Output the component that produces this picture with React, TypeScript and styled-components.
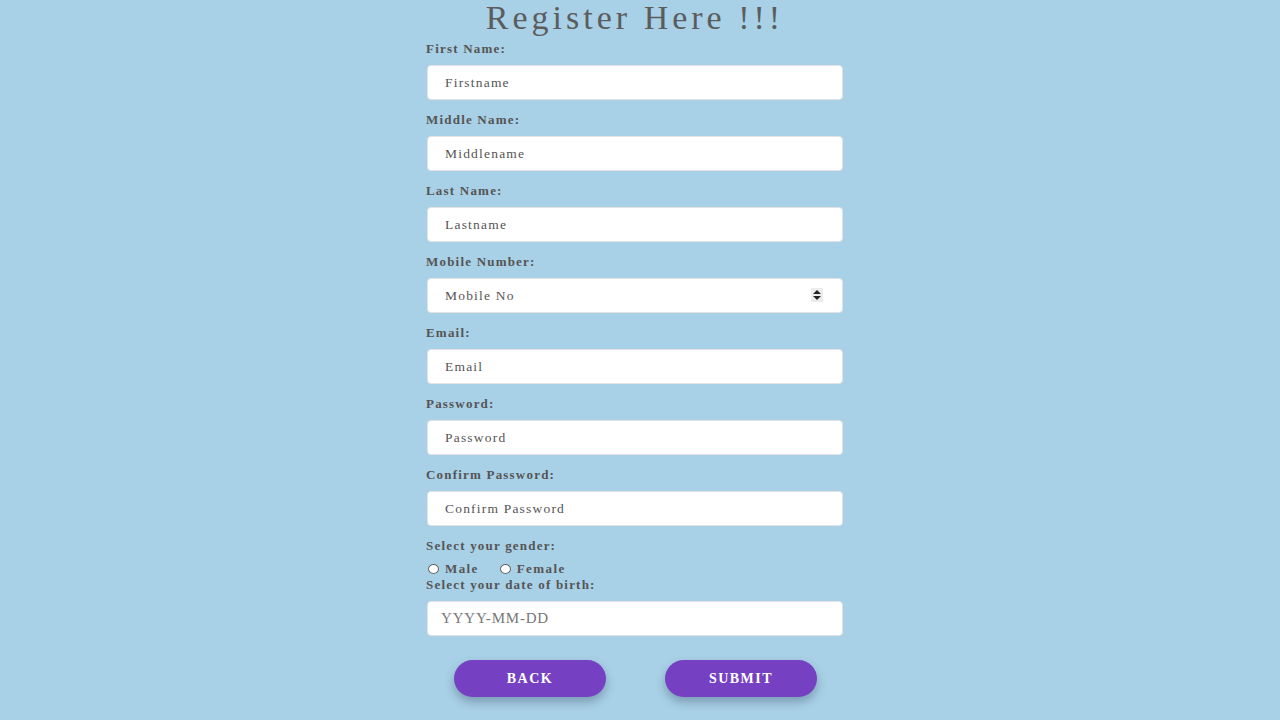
import React from 'react'
import styled, { createGlobalStyle } from 'styled-components'

const GlobalStyle = createGlobalStyle`
  html, body {
    margin: 0;
    padding: 0;
    background: #a8d0e6;
    font-family: "Liberation Serif", "Times New Roman", serif;
    color: #555;
  }
`

const Page = styled.div`
  width: 1280px;
  height: 720px;
  overflow: hidden;
  display: flex;
  flex-direction: column;
  align-items: center;
`

const Title = styled.h1`
  margin: 0 10px 5px 0;
  font-size: 34px;
  font-weight: normal;
  line-height: 36px;
  color: #5c5c5c;
  letter-spacing: 4px;
`

const Form = styled.form`
  width: 418px;
  margin-right: 10px;
  display: flex;
  flex-direction: column;
`

const Field = styled.div`
  display: flex;
  flex-direction: column;
  margin-bottom: 12px;
`

const Label = styled.label<{ $gap?: number }>`
  font-size: 13px;
  font-weight: bold;
  line-height: 16px;
  letter-spacing: 1.2px;
  margin-bottom: ${p => p.$gap ?? 8}px;
`

const Input = styled.input<{ $big?: boolean }>`
  box-sizing: border-box;
  width: 416px;
  height: 35px;
  margin-left: 1px;
  border: 1px solid #e2e2e2;
  border-radius: 4px;
  background: #fff;
  padding: 0 ${p => (p.$big ? '13px' : '17px')};
  font-family: inherit;
  font-size: ${p => (p.$big ? '15px' : '13.5px')};
  letter-spacing: ${p => (p.$big ? '0.8px' : '1.2px')};
  color: #555;
  outline: none;
  &::placeholder {
    color: ${p => (p.$big ? '#777' : '#555')};
  }
`

const NumberBox = styled.div`
  position: relative;
`

const Spinner = styled.span`
  position: absolute;
  right: 21px;
  top: 10px;
  width: 12px;
  height: 14px;
  background: #ececec;
  display: flex;
  align-items: center;
  justify-content: center;
`

const GenderRow = styled.div`
  display: flex;
  align-items: center;
  gap: 19px;
  margin-top: 7px;
  font-size: 13px;
  font-weight: bold;
  line-height: 16px;
  letter-spacing: 1.4px;
`

const Choice = styled.label`
  display: flex;
  align-items: center;
  gap: 6px;
`

const Radio = styled.span`
  display: inline-block;
  box-sizing: border-box;
  width: 11px;
  height: 10px;
  border-radius: 50%;
  border: 1px solid #666;
  background: #fff;
  margin-left: 2px;
`

const Buttons = styled.div`
  display: flex;
  gap: 59px;
  padding-left: 28px;
  margin-top: 12px;
`

const Button = styled.button`
  width: 152px;
  height: 37px;
  border: none;
  border-radius: 19px;
  background: #7541c2;
  color: #fff;
  font-family: inherit;
  font-size: 14px;
  font-weight: bold;
  letter-spacing: 1.5px;
  box-shadow: 0 5px 10px rgba(40, 60, 90, 0.35);
  cursor: pointer;
`

const fields = [
  { label: 'First Name:', placeholder: 'Firstname', type: 'text' },
  { label: 'Middle Name:', placeholder: 'Middlename', type: 'text' },
  { label: 'Last Name:', placeholder: 'Lastname', type: 'text' },
  { label: 'Mobile Number:', placeholder: 'Mobile No', type: 'number' },
  { label: 'Email:', placeholder: 'Email', type: 'text' },
  { label: 'Password:', placeholder: 'Password', type: 'text' },
  { label: 'Confirm Password:', placeholder: 'Confirm Password', type: 'text' },
]

export default function App() {
  return (
    <>
      <GlobalStyle />
      <Page>
        <Title>Register Here !!!</Title>
        <Form onSubmit={e => e.preventDefault()}>
          {fields.map(f => (
            <Field key={f.label}>
              <Label>{f.label}</Label>
              {f.type === 'number' ? (
                <NumberBox>
                  <Input placeholder={f.placeholder} />
                  <Spinner>
                    <svg width="8" height="10" viewBox="0 0 8 10">
                      <path d="M4 0 L8 4 H0 Z M4 10 L0 6 H8 Z" fill="#222" />
                    </svg>
                  </Spinner>
                </NumberBox>
              ) : (
                <Input placeholder={f.placeholder} />
              )}
            </Field>
          ))}
          <Label $gap={0}>Select your gender:</Label>
          <GenderRow>
            <Choice>
              <Radio /> Male
            </Choice>
            <Choice>
              <Radio /> Female
            </Choice>
          </GenderRow>
          <Field>
            <Label>Select your date of birth:</Label>
            <Input $big placeholder="YYYY-MM-DD" />
          </Field>
          <Buttons>
            <Button type="button">BACK</Button>
            <Button type="submit">SUBMIT</Button>
          </Buttons>
        </Form>
      </Page>
    </>
  )
}
